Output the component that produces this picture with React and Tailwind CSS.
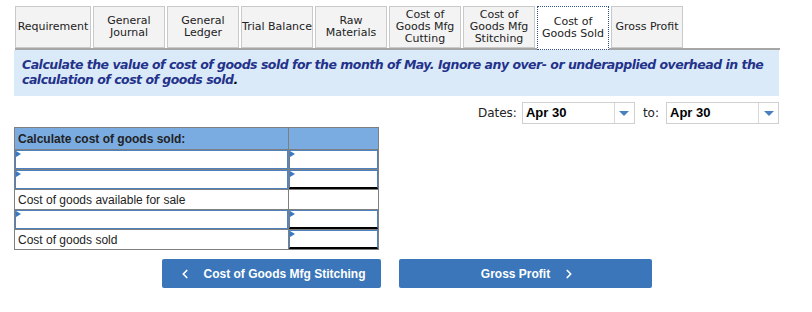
import { ChevronLeft, ChevronRight } from 'lucide-react';

const tabs = [
  { label: ['Requirement'], w: 'w-[76px]' },
  { label: ['General', 'Journal'], w: 'w-[72px]' },
  { label: ['General', 'Ledger'], w: 'w-[72px]' },
  { label: ['Trial Balance'], w: 'w-[72px]' },
  { label: ['Raw', 'Materials'], w: 'w-[72px]' },
  { label: ['Cost of', 'Goods Mfg', 'Cutting'], w: 'w-[72px]' },
  { label: ['Cost of', 'Goods Mfg', 'Stitching'], w: 'w-[72px]' },
  { label: ['Cost of', 'Goods Sold'], w: 'w-[72px]', active: true },
  { label: ['Gross Profit'], w: 'w-[72px]' },
];

function Marker() {
  return (
    <span className="absolute left-0 top-0 w-0 h-0 border-t-[3px] border-b-[3px] border-l-[5px] border-t-transparent border-b-transparent border-l-[#3b78c4]" />
  );
}

function InputCell({ underline }) {
  return (
    <td className="border border-[#7f7f7f] p-0 h-[20px]">
      <div
        className={`relative h-[19px] border border-[#4d82bf] bg-white ${
          underline ? 'border-b-2 border-b-black' : ''
        }`}
      >
        <Marker />
      </div>
    </td>
  );
}

function DateSelect() {
  return (
    <div className="flex h-[22px] w-[113px] border border-[#d0d0d0] bg-white">
      <div className="flex-1 flex items-center pl-[3px] text-[13px] font-bold text-black font-['Liberation_Sans',Arial,sans-serif]">
        Apr 30
      </div>
      <div className="w-[20px] border-l border-[#d9d9d9] flex items-center justify-center">
        <span className="w-0 h-0 border-l-[5px] border-r-[5px] border-t-[5px] border-l-transparent border-r-transparent border-t-[#4a7fc1]" />
      </div>
    </div>
  );
}

export default function App() {
  return (
    <div className="w-[812px] h-[312px] bg-white relative font-['DejaVu_Sans',Verdana,sans-serif]">
      {/* Tabs */}
      <div className="pt-[6px] pl-[15px]">
        <div className="flex gap-[2px] w-[765px] border-b-2 border-[#a6a6a6]">
          {tabs.map((t, i) => (
            <div
              key={i}
              className={`${t.w} flex flex-col items-center justify-center text-[11px] leading-[12px] text-[#222] ${
                t.active
                  ? 'bg-white border border-dotted border-[#2d4f8c] -mb-[2px] h-[44px]'
                  : 'bg-[#f3f3f3] border border-[#c9c9c9] h-[42px]'
              }`}
            >
              {t.label.map((l, j) => (
                <span key={j} className="whitespace-nowrap">{l}</span>
              ))}
            </div>
          ))}
        </div>
      </div>

      {/* Instructions */}
      <div className="ml-[14px] w-[765px] h-[46px] bg-[#dbeaf8] pl-[8px] pt-[8px] text-[12.5px] leading-[14.5px] font-bold italic text-[#23328a] tracking-[-0.5px]">
        Calculate the value of cost of goods sold for the month of May. Ignore any over- or underapplied overhead in the
        calculation of cost of goods sold<span className="text-black">.</span>
      </div>

      {/* Dates */}
      <div className="flex items-center justify-end w-[779px] mt-[6px] gap-[5px] text-[12px] text-[#222]">
        <span>Dates:</span>
        <DateSelect />
        <span className="ml-[3px] mr-[2px]">to:</span>
        <DateSelect />
      </div>

      {/* Table */}
      <table className="ml-[14px] mt-[3px] border-collapse font-['Liberation_Sans',Arial,sans-serif] text-[12px] text-[#222]">
        <tbody>
          <tr className="bg-[#7aace2]">
            <td className="w-[274px] h-[22px] border border-[#7f7f7f] px-[3px] font-bold">Calculate cost of goods sold:</td>
            <td className="w-[90px] border border-[#7f7f7f]" />
          </tr>
          <tr>
            <InputCell />
            <InputCell />
          </tr>
          <tr>
            <InputCell />
            <InputCell underline />
          </tr>
          <tr>
            <td className="h-[20px] border border-[#7f7f7f] px-[3px]">Cost of goods available for sale</td>
            <td className="border border-[#7f7f7f]" />
          </tr>
          <tr>
            <InputCell />
            <InputCell underline />
          </tr>
          <tr>
            <td className="h-[20px] border border-[#7f7f7f] px-[3px]">Cost of goods sold</td>
            <InputCell underline />
          </tr>
        </tbody>
      </table>

      {/* Buttons */}
      <div className="flex mt-[9px] ml-[162px] gap-[18px] font-['Liberation_Sans',Arial,sans-serif] text-[12px] font-bold text-white">
        <button className="w-[219px] h-[29px] bg-[#3a76b9] rounded-[2px] flex items-center justify-center gap-[12px]">
          <ChevronLeft size={14} strokeWidth={3} />
          <span>Cost of Goods Mfg Stitching</span>
        </button>
        <button className="w-[253px] h-[29px] bg-[#3a76b9] rounded-[2px] flex items-center justify-center gap-[12px] pl-[6px]">
          <span>Gross Profit</span>
          <ChevronRight size={14} strokeWidth={3} />
        </button>
      </div>
    </div>
  );
}
